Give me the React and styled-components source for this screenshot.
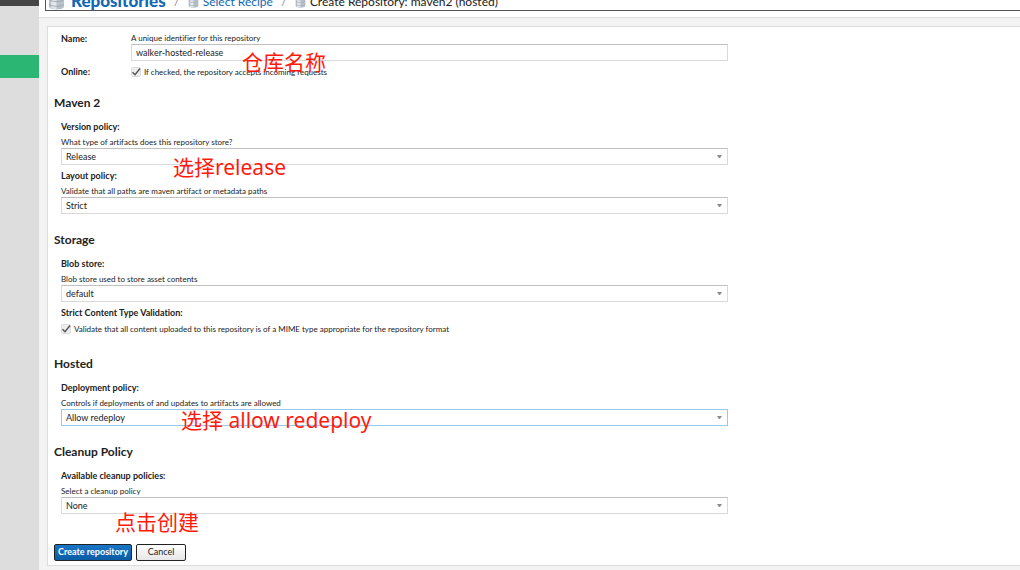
import { useId } from 'react';
import styled, { createGlobalStyle } from 'styled-components';

const SECTIONS = [
  {
    title: 'Maven 2',
    fields: [
      {
        label: 'Version policy:',
        hint: 'What type of artifacts does this repository store?',
        options: ['Release', 'Snapshot', 'Mixed'],
        note: { text: '选择release', left: 112, top: 4 },
      },
      {
        label: 'Layout policy:',
        hint: 'Validate that all paths are maven artifact or metadata paths',
        options: ['Strict', 'Permissive'],
      },
    ],
  },
  {
    title: 'Storage',
    fields: [
      {
        label: 'Blob store:',
        hint: 'Blob store used to store asset contents',
        options: ['default'],
      },
      {
        label: 'Strict Content Type Validation:',
        check:
          'Validate that all content uploaded to this repository is of a MIME type appropriate for the repository format',
      },
    ],
  },
  {
    title: 'Hosted',
    fields: [
      {
        label: 'Deployment policy:',
        hint: 'Controls if deployments of and updates to artifacts are allowed',
        options: ['Allow redeploy', 'Disable redeploy', 'Read-only'],
        active: true,
        note: { text: '选择 allow redeploy', left: 120, top: -4 },
      },
    ],
  },
  {
    title: 'Cleanup Policy',
    fields: [
      {
        label: 'Available cleanup policies:',
        hint: 'Select a cleanup policy',
        options: ['None'],
        note: { text: '点击创建', left: 54, top: 10 },
      },
    ],
  },
];

const DatabaseIcon = ({ size }) => (
  <svg width={size} height={size} viewBox='0 0 16 16' aria-hidden='true'>
    <path d='M1 2v11c0 1.500 3 2.500 7 2.500s7-1 7-2.500V2z' fill='#b9c1ca' />
    <path d='M3 3v11c1 .6 2.500 1 5 1V3z' fill='#e2e7ec' />
    <path
      d='M1 6c1 1.500 4 2 7 2s6-.5 7-2M1 10.500c1 1.500 4 2 7 2s6-.5 7-2'
      fill='none'
      stroke='#98a2ad'
      strokeWidth='.8'
    />
    <ellipse cx='8' cy='2.500' rx='7' ry='2' fill='#e3e8ed' stroke='#a5aeb8' strokeWidth='.6' />
  </svg>
);

const CheckField = ({ id, children }) => (
  <CheckRow>
    <Tick>
      <input id={id} type='checkbox' defaultChecked />
      <svg width='10' height='10' viewBox='0 0 10 10' aria-hidden='true'>
        <path d='M1.500 5.200 4 7.800 9 1.500' fill='none' stroke='#555' strokeWidth='1.400' />
      </svg>
    </Tick>
    <label htmlFor={id}>{children}</label>
  </CheckRow>
);

const SelectField = ({ label, hint, options, active, note }) => {
  const id = useId();
  return (
    <Field>
      <Label htmlFor={id}>{label}</Label>
      <Hint>{hint}</Hint>
      <SelectBox>
        <Select id={id} $active={active}>
          {options.map((option) => (
            <option key={option}>{option}</option>
          ))}
        </Select>
        <svg width='5' height='3' viewBox='0 0 5 3' aria-hidden='true'>
          <path d='M0 0h5L3 3H2z' fill='#8c8c8c' />
        </svg>
        {note && (
          <Note $left={note.left} $top={note.top}>
            {note.text}
          </Note>
        )}
      </SelectBox>
    </Field>
  );
};

const ToggleField = ({ label, check }) => {
  const id = useId();
  return (
    <Field>
      <Label htmlFor={id}>{label}</Label>
      <CheckField id={id}>{check}</CheckField>
    </Field>
  );
};

const App = () => {
  return (
    <>
      <GlobalStyle />
      <Page>
        <Sidebar>
          <SidebarTop />
          <SidebarActive />
        </Sidebar>
        <Main>
          <Header>
            <Breadcrumb>
              <DatabaseIcon size={17} />
              <a className='root' href='#repositories'>
                Repositories
              </a>
              <span className='slash'>/</span>
              <DatabaseIcon size={11} />
              <a href='#recipe'>Select Recipe</a>
              <span className='slash'>/</span>
              <DatabaseIcon size={11} />
              <span>Create Repository: maven2 (hosted)</span>
            </Breadcrumb>
          </Header>
          <Panel>
            <General>
              <Label htmlFor='name'>Name:</Label>
              <div>
                <Hint>A unique identifier for this repository</Hint>
                <SelectBox>
                  <TextInput id='name' defaultValue='walker-hosted-release' />
                  <Note $left={111} $top={3}>
                    仓库名称
                  </Note>
                </SelectBox>
              </div>
              <Label htmlFor='online'>Online:</Label>
              <CheckField id='online'>
                If checked, the repository accepts incoming requests
              </CheckField>
            </General>
            {SECTIONS.map((section) => (
              <Section key={section.title}>
                <h2>{section.title}</h2>
                <Fields>
                  {section.fields.map((field) =>
                    field.check ? (
                      <ToggleField key={field.label} {...field} />
                    ) : (
                      <SelectField key={field.label} {...field} />
                    )
                  )}
                </Fields>
              </Section>
            ))}
            <Actions>
              <Button $primary>Create repository</Button>
              <Button>Cancel</Button>
            </Actions>
          </Panel>
        </Main>
      </Page>
    </>
  );
};

const GlobalStyle = createGlobalStyle`
  * {
    box-sizing: border-box;
  }
  body {
    margin: 0;
    background: #f3f3f3;
    color: #222;
    font-family: Lato, 'Noto Sans CJK SC', sans-serif;
    font-size: 8px;
    font-variant-ligatures: none;
  }
  input,
  select,
  button {
    margin: 0;
    color: inherit;
    font: inherit;
  }
`;

const Page = styled.div`
  display: flex;
  min-height: 100vh;
  overflow: hidden;
`;

const Sidebar = styled.aside`
  flex: none;
  width: 39px;
  background: #ddd;
`;

const SidebarTop = styled.div`
  height: 6px;
  margin-bottom: 49px;
  background: #444;
`;

const SidebarActive = styled.div`
  height: 23px;
  background: #2bb673;
`;

const Main = styled.main`
  flex: 1;
  min-width: 0;
`;

const Header = styled.header`
  height: 18px;
  padding-left: 6px;
  border-bottom: 1px solid #dcdcdc;
  background: #fff;
`;

const Breadcrumb = styled.nav`
  display: flex;
  align-items: flex-end;
  height: 11px;
  padding-left: 2px;
  border-left: 1px solid #555;
  border-bottom: 1px solid #555;
  font-size: 12px;
  line-height: 16px;
  white-space: nowrap;

  svg {
    flex: none;
    margin-right: 4px;
    margin-bottom: 2px;
  }
  svg:first-child {
    margin-right: 6px;
    margin-bottom: 0;
  }
  a {
    color: #1268b3;
    text-decoration: none;
  }
  .root {
    font-size: 17px;
    font-weight: 900;
    line-height: 18px;
  }
  .slash {
    width: 22px;
    text-align: center;
    color: #888;
  }
`;

const Panel = styled.form`
  margin: 8px 0 4px 8px;
  padding: 3px 6px 4px;
  border: 1px solid #dcdcdc;
  border-right: 0;
  background: #fff;
`;

const Label = styled.label`
  font-size: 9px;
  font-weight: 700;
  line-height: 14px;
`;

const General = styled.div`
  display: grid;
  grid-template-columns: 70px 1fr;
  row-gap: 2px;
  max-width: 674px;
  padding-left: 7px;

  > ${Label} {
    padding-top: 2px;
  }
`;

const Section = styled.section`
  margin-top: 18px;

  ${General} + & {
    margin-top: 14px;
  }
  h2 {
    margin: 0 0 9px;
    font-size: 12px;
    font-weight: 700;
    line-height: 16px;
  }
`;

const Fields = styled.div`
  display: grid;
  gap: 4px;
  max-width: 674px;
  padding-left: 7px;
`;

const Field = styled.div`
  display: flex;
  flex-direction: column;
`;

const Hint = styled.div`
  padding-top: 2px;
  line-height: 12px;
`;

const SelectBox = styled.div`
  position: relative;

  > svg {
    position: absolute;
    top: 7px;
    right: 6px;
    pointer-events: none;
  }
`;

const Select = styled.select`
  display: block;
  width: 100%;
  height: 17px;
  padding: 0 4px;
  appearance: none;
  border: 1px solid;
  border-color: ${({ $active }) =>
    $active ? '#99c8ea' : '#c0c0c0 #d9d9d9 #d9d9d9'};
  border-radius: 0;
  background: #fff;
  font-size: 9px;
  line-height: 15px;
`;

const TextInput = styled.input`
  display: block;
  width: 100%;
  height: 17px;
  padding: 0 4px;
  border: 1px solid #d9d9d9;
  border-top-color: #c0c0c0;
  font-size: 9px;
`;

const Note = styled.span`
  position: absolute;
  top: ${({ $top }) => $top}px;
  left: ${({ $left }) => $left}px;
  z-index: 1;
  color: #ff1a0d;
  font-family: 'Noto Sans', 'Noto Sans CJK SC', sans-serif;
  font-size: 21px;
  line-height: 30px;
  white-space: nowrap;
  pointer-events: none;
`;

const CheckRow = styled.div`
  display: flex;
  align-items: center;
  gap: 3px;
  height: 18px;
`;

const Tick = styled.span`
  position: relative;
  display: flex;

  input {
    width: 10px;
    height: 10px;
    appearance: none;
    border: 1px solid #ddd;
    border-radius: 2px;
    background: #eee;
  }
  svg {
    position: absolute;
    inset: 0;
    pointer-events: none;
  }
  input:not(:checked) + svg {
    display: none;
  }
`;

const Actions = styled.div`
  display: flex;
  gap: 4px;
  margin-top: 30px;
`;

const Button = styled.button.attrs({ type: 'button' })`
  width: ${({ $primary }) => ($primary ? 78 : 50)}px;
  height: 17px;
  padding: 0 0 2px;
  border: 1px solid #222;
  border-radius: 2px;
  background: ${({ $primary }) =>
    $primary ? 'linear-gradient(#1876c6, #0a5ca5)' : 'linear-gradient(#fff, #e6e6e6)'};
  color: ${({ $primary }) => ($primary ? '#fff' : '#222')};
  font-size: 9px;
  font-weight: ${({ $primary }) => ($primary ? 700 : 400)};
  line-height: 13px;
  white-space: nowrap;
`;

export default App;
